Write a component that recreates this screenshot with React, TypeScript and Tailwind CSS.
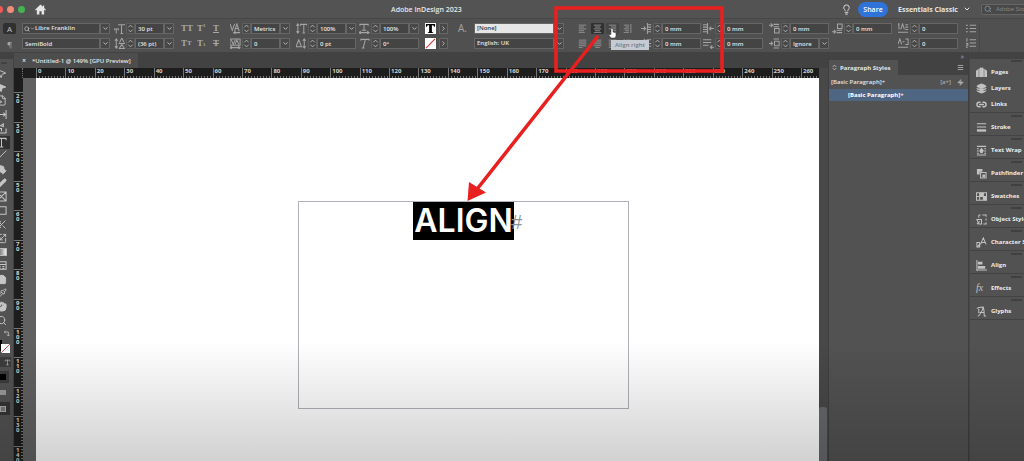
import React from 'react'
import {
  ChevronDown, ChevronRight, FileInput, Hand, Layers, Lightbulb, Link2, Menu,
  MousePointer2, PenTool, Pencil, Pipette, Scaling, Scissors, Search, Slash, StickyNote, Type, Zap,
} from 'lucide-react'
import clsx from 'clsx'

type Icon = React.ReactNode

/* Small line drawing on a 12 x 12 grid */
const Draw = ({ d, fill, className = 'size-[11px]' }: { d: string, fill?: string, className?: string }) => (
  <svg viewBox="0 0 12 12" className={clsx('shrink-0', className)} fill="none" stroke="currentColor" strokeWidth="1.1" aria-hidden="true">
    <path d={d} />
    {fill && <path d={fill} fill="currentColor" stroke="none" />}
  </svg>
)

const Stepper = ({ label }: { label: string }) => (
  <button aria-label={`Step ${label}`} className="flex h-[11px] w-[9px] shrink-0 items-center justify-center rounded-[1px] border border-[#5f5f5f] bg-[#484848] text-[#c4c4c4]">
    <Draw d="M3 4.5L6 1.5L9 4.5M3 7.5L6 10.5L9 7.5" className="size-[9px]" />
  </button>
)

const DropButton = ({ label }: { label: string }) => (
  <button aria-label={label} className="flex h-[11px] w-[10px] shrink-0 items-center justify-center border border-[#666] bg-[#484848] text-[#c4c4c4]">
    <ChevronDown className="size-[7px]" strokeWidth={3} />
  </button>
)

const Box = ({ label, value, className }: { label: string, value: string, className: string }) => (
  <input
    aria-label={label}
    defaultValue={value}
    className={clsx('h-[11px] shrink-0 border border-[#666] bg-[#444] px-[2px] text-[6px] leading-[9px] font-semibold text-[#e4e4e4] outline-none', className)}
  />
)

const Picker = ({ label, value, className }: { label: string, value: string, className: string }) => (
  <select
    aria-label={label}
    defaultValue={value}
    className={clsx('h-[11px] shrink-0 appearance-none border border-[#666] px-[2px] text-[6px] leading-[9px] font-semibold outline-none', className)}
  >
    <option>{value}</option>
  </select>
)

const Field = ({ icon, label, value, drop, wide }: { icon: Icon, label: string, value: string, drop?: boolean, wide?: boolean }) => (
  <div className="flex h-[11px] items-center">
    <span className="flex w-[12px] shrink-0 text-[#a4a4a4]">{icon}</span>
    <Stepper label={label} />
    <Box label={label} value={value} className={wide ? 'w-[39px]' : 'w-[29px]'} />
    {drop && <DropButton label={`${label} presets`} />}
  </div>
)

const Group = ({ className, children }: { className?: string, children: React.ReactNode }) => (
  <div className={clsx('flex shrink-0 flex-col gap-1', className)}>{children}</div>
)

const TextButton = ({ label, className, children }: { label: string, className?: string, children: React.ReactNode }) => (
  <button aria-label={label} className={clsx("flex h-[11px] w-4 items-center font-['Liberation_Serif'] text-[9px] leading-none font-bold text-[#a8a8a8]", className)}>
    {children}
  </button>
)

const alignRows = [
  [
    { label: 'Align left', d: 'M1 1.5H11M1 4H8M1 6.5H11M1 9H8M1 11.5H9' },
    { label: 'Align centre', d: 'M1 1.5H11M2.5 4H9.5M1 6.5H11M2.5 9H9.5M1 11.5H11' },
    { label: 'Align right', d: 'M1 1.5H11M4 4H11M1 6.5H11M4 9H11M3 11.5H11' },
    { label: 'Align towards spine', d: 'M1 1.5H8M3 4H8M1 6.5H8M3 9H8M1 11.5H8M10.5 0V12' },
  ],
  [
    { label: 'Justify left', d: 'M1 1.5H11M1 4H11M1 6.5H11M1 9H11M1 11.5H6' },
    { label: 'Justify centre', d: 'M1 1.5H11M1 4H11M1 6.5H11M1 9H11M3 11.5H9' },
    { label: 'Justify all', d: 'M1 1.5H11M1 4H11M1 6.5H11M1 9H11M1 11.5H11' },
    { label: 'Align away from spine', d: 'M4 1.5H11M4 4H9M4 6.5H11M4 9H9M4 11.5H11M1.5 0V12' },
  ],
]

const TitleBar = () => (
  <header className="flex h-[19px] shrink-0 items-center overflow-hidden border-b border-[#474747] bg-[#535353] text-[#e6e6e6]">
    <div className="flex w-[391px] shrink-0 items-center">
      <div className="-ml-1 flex gap-1">
        <button aria-label="Close window" className="size-[7px] rounded-full bg-[#ee5b55]" />
        <button aria-label="Minimise window" className="size-[7px] rounded-full bg-[#f08d77]" />
        <button aria-label="Zoom window" className="size-[7px] rounded-full bg-[#44b450]" />
      </div>
      <button aria-label="Home" className="ml-[10px]">
        <Draw d="" fill="M6 .5L0 6.2L.8 7L2 6V11.5H4.8V8H7.2V11.5H10V6L11.2 7L12 6.2L10 4.3V1.5H8.6V3Z" className="size-[11px]" />
      </button>
    </div>
    <h1 className="flex-1 text-[7px] leading-none font-semibold whitespace-nowrap">Adobe InDesign 2023</h1>
    <div className="flex w-[183px] shrink-0 items-center">
      <button aria-label="Tips" className="shrink-0"><Lightbulb className="size-[11px]" /></button>
      <button className="ml-[6px] h-[15px] w-[30px] shrink-0 rounded-full bg-[#2f73d9] text-[7px] leading-none font-semibold text-white">Share</button>
      <button className="ml-[10px] flex shrink-0 items-center text-[7px] leading-none font-bold whitespace-nowrap">
        <span className="w-[65px] text-left">Essentials Classic</span>
        <ChevronDown className="size-[8px]" strokeWidth={3} />
      </button>
      <label className="ml-[10px] flex h-[11px] w-[60px] shrink-0 items-center rounded-[2px] border border-[#666] bg-[#484848] pl-[2px]">
        <Search className="size-[8px] shrink-0 text-[#8fa3b8]" />
        <input type="search" aria-label="Search Adobe Stock" placeholder="Adobe Stock" className="ml-1 w-[44px] text-[6px] leading-none outline-none placeholder:text-[#8a8a8a]" />
      </label>
    </div>
  </header>
)

const ControlBar = () => (
  <div className="flex h-[33px] shrink-0 overflow-hidden bg-[#505050] pt-1 pl-[3px]">
    <Group className="w-[19px]">
      <button aria-label="Character formatting" className="h-[11px] w-[13px] rounded-[2px] bg-[#303030] text-[8px] leading-none text-[#c8c8c8]">A</button>
      <button aria-label="Paragraph formatting" className="h-[11px] w-[13px] text-[8px] leading-none text-[#a8a8a8]">¶</button>
    </Group>

    <Group>
      <div className="flex">
        <div className="flex w-[78px] items-center border border-[#666] bg-[#444] text-[#c4c4c4]">
          <Search className="ml-px size-[6px] shrink-0" strokeWidth={3} />
          <ChevronDown className="size-[5px] shrink-0" strokeWidth={3} />
          <input aria-label="Font family" defaultValue="Libre Franklin" className="h-[9px] w-[60px] text-[6px] leading-[9px] font-semibold text-[#e4e4e4] outline-none" />
        </div>
        <DropButton label="Font list" />
      </div>
      <div className="flex">
        <Box label="Font style" value="SemiBold" className="w-[78px]" />
        <DropButton label="Font style list" />
      </div>
    </Group>

    <Group className="ml-[4px]">
      <Field label="Font size" value="30 pt" drop icon={<Draw d="M0 6.5H5M2.5 6.5V11.5M4.5 2H12M8.2 2V11.5M7 11.5H10M.3 6V8M4.8 6V8" />} />
      <Field label="Leading" value="(36 pt)" drop icon={<Draw d="M2.5 1V11M1 3L2.5 1L4 3M1 9L2.5 11L4 9M5 11.5H12M5 6H12M6 5L8.5 0L11 5M6 11L8.5 7L11 11" />} />
    </Group>

    <Group className="ml-[7px]">
      <div className="flex">
        <TextButton label="All caps">TT</TextButton>
        <TextButton label="Superscript">T<sup className="text-[5px]">1</sup></TextButton>
        <TextButton label="Underline" className="underline">T</TextButton>
      </div>
      <div className="flex">
        <TextButton label="Small caps">T<span className="text-[7px]">T</span></TextButton>
        <TextButton label="Subscript">T<sub className="text-[5px]">1</sub></TextButton>
        <TextButton label="Strikethrough" className="line-through">T</TextButton>
      </div>
    </Group>

    <Group className="ml-px">
      <Field label="Kerning" value="Metrics" drop icon={<Draw d="M0 1L2.5 8L5 1M5 9L7.5 1L10 9M6 6H9M4 10.5H11M6 9L4 10.5L6 12" />} />
      <Field label="Tracking" value="0" drop icon={<Draw d="M0 1H11V8H0ZM1.5 2L3.5 7L5.5 2M5.5 7L7.5 2L9.5 7M0 10.5H11M2 9L0 10.5L2 12M9 9L11 10.5L9 12" />} />
    </Group>

    <Group className="ml-[6px]">
      <Field label="Vertical scale" value="100%" drop icon={<Draw d="M2 1V11M.5 3L2 1L3.5 3M.5 9L2 11L3.5 9M5 3V1.5H12V3M8.5 1.5V11.5M7 11H10" />} />
      <Field label="Baseline shift" value="0 pt" wide icon={<Draw d="M0 9.5H6L3 2ZM9 1V11M7.5 3L9 1L10.5 3M7.5 9L9 11L10.5 9" />} />
    </Group>

    <Group className="ml-[3px]">
      <Field label="Horizontal scale" value="100%" drop icon={<Draw d="M1 3V1.5H10V3M5.5 1.5V8M3 8H8M0 10.5H11M2 9L0 10.5L2 12M9 9L11 10.5L9 12" />} />
      <Field label="Skew" value="0°" wide icon={<Draw d="M2 3V1.5H11V3M7 1.5L4.5 11M3 11H6" />} />
    </Group>

    <Group className="ml-[6px]">
      <div className="flex gap-[3px]">
        <button aria-label="Fill" className="flex size-[11px] items-center justify-center bg-white">
          <Draw d="" fill="M1 1H11V4H10L9 2.5H7.5V9.5L9 10.5V11H3V10.5L4.5 9.5V2.5H3L2 4H1Z" className="size-[11px] text-black" />
        </button>
        <button aria-label="Fill options" className="flex h-[11px] w-[9px] items-center justify-center border border-[#666] bg-[#484848] text-[#c4c4c4]"><ChevronRight className="size-[7px]" strokeWidth={3} /></button>
      </div>
      <div className="flex gap-[3px]">
        <button aria-label="Stroke" className="size-[11px] bg-white">
          <Draw d="M1 11L11 1" className="size-[11px] text-[#d3302b]" />
        </button>
        <button aria-label="Stroke options" className="flex h-[11px] w-[9px] items-center justify-center border border-[#666] bg-[#484848] text-[#c4c4c4]"><ChevronRight className="size-[7px]" strokeWidth={3} /></button>
      </div>
    </Group>

    <span className="ml-[10px] h-[11px] w-[16px] shrink-0 text-[10px] leading-[11px] text-[#a4a4a4]">A.</span>

    <Group>
      <div className="flex">
        <Picker label="Character style" value="[None]" className="w-[80px] bg-[#e6e6e6] text-[#333]" />
        <DropButton label="Character style list" />
      </div>
      <div className="flex">
        <Picker label="Language" value="English: UK" className="w-[80px] bg-[#444] text-[#e4e4e4]" />
        <DropButton label="Language list" />
      </div>
    </Group>

    <Group className="ml-[12px] w-[64px]">
      {alignRows.map((row, i) => (
        <div className="flex gap-[2px]" key={i}>
          {row.map(({ label, d }) => (
            <button
              key={label}
              aria-label={label}
              className={clsx(
                'flex h-[11px] w-[13px] items-center justify-center rounded-[1px] text-[#9c9c9c]',
                label === 'Align centre' && 'bg-[#303030]',
                label === 'Align right' && 'bg-[#454545]',
              )}
            >
              <Draw d={d} className="size-[9px]" />
            </button>
          ))}
        </div>
      ))}
    </Group>

    <Group className="ml-px">
      <Field label="Left indent" value="0 mm" wide icon={<Draw d="M0 6H5M3 4L5 6L3 8M7 0V12M7 2H11M7 4.5H11M7 7H11M7 9.5H11" />} />
      <Field label="First line indent" value="0 mm" wide icon={<Draw d="M0 3H5M3 1L5 3L3 5M6 2H11M2 6H11M2 9H11" />} />
    </Group>

    <Group className="ml-[2px]">
      <Field label="Right indent" value="0 mm" wide icon={<Draw d="M12 6H7M9 4L7 6L9 8M5 0V12M0 2H5M0 4.5H5M0 7H5M0 9.5H5" />} />
      <Field label="Last line indent" value="0 mm" wide icon={<Draw d="M0 2H9M0 5H9M0 8H6M8 10H12M10 8L8 10L10 12" />} />
    </Group>

    <Group className="ml-[6px]">
      <Field label="Space before" value="0 mm" wide icon={<Draw d="M0 2.5H4M2 .5L4 2.5L2 4.5M5 1.5H11M5 4H11M6 6H11V11H6Z" />} />
      <Field label="Space between" value="Ignore" drop icon={<Draw d="M0 6H4M2 4L4 6L2 8M5 1H11M5 11H11M6 3.5H11V8.5H6Z" />} />
    </Group>

    <Group className="ml-[3px]">
      <Field label="Space after" value="0 mm" wide icon={<Draw d="M0 9.5H4M2 7.5L4 9.5L2 11.5M5 10.5H11M6 1H11V6H6ZM5 8H11" />} />
    </Group>

    <Group className="ml-[6px]">
      <Field label="Drop cap lines" value="0" wide icon={<Draw d="M1 0V7M0 2L1 .5M3 7L5 1L7 7M8 2H11M8 4.5H11M8 7H11M0 10H11" />} />
      <Field label="Drop cap characters" value="0" wide icon={<Draw d="M0 7L2 1L4 7M5 4H7M8 1H11V7H8M0 10H11" />} />
    </Group>

    <div className="ml-[8px] flex w-[14px] shrink-0 flex-col gap-1 border-r border-[#484848] text-[#a4a4a4]">
      <button aria-label="Bulleted list"><Draw d="M0 2.5H2M0 6H2M0 9.5H2M4 2.5H11M4 6H11M4 9.5H11" className="size-[11px]" /></button>
      <button aria-label="Numbered list"><Draw d="M1 0V4M0 6H2V8H0V10H2M4 2H11M4 5.5H11M4 9H11" className="size-[11px]" /></button>
    </div>
  </div>
)

const tools: { label: string, icon: Icon }[] = [
  { label: 'Selection', icon: <MousePointer2 className="size-[11px] shrink-0" /> },
  { label: 'Direct selection', icon: <MousePointer2 className="size-[11px] shrink-0 fill-current" /> },
  { label: 'Page', icon: <FileInput className="size-[11px] shrink-0" /> },
  { label: 'Gap', icon: <Draw d="M1 1V11M11 1V11M2 6H10M4 4L2 6L4 8M8 4L10 6L8 8" /> },
  { label: 'Content collector', icon: <Draw d="M1 4V11H11V6M3 9V6H6V9M5 3L8 1V4Z" /> },
  { label: 'Type', icon: <Draw d="M1 3.5V1.5H11V3.5M6 1.5V11M4 11H8" /> },
  { label: 'Line', icon: <Slash className="size-[11px] shrink-0" /> },
  { label: 'Pen', icon: <PenTool className="size-[11px] shrink-0 fill-current" /> },
  { label: 'Pencil', icon: <Pencil className="size-[11px] shrink-0 fill-current" /> },
  { label: 'Rectangle frame', icon: <Draw d="M1 1H11V11H1ZM1 1L11 11M11 1L1 11" /> },
  { label: 'Rectangle', icon: <Draw d="M1 2H11V10H1Z" /> },
  { label: 'Scissors', icon: <Scissors className="size-[11px] shrink-0" /> },
  { label: 'Free transform', icon: <Scaling className="size-[11px] shrink-0" /> },
  { label: 'Gradient swatch', icon: <span className="h-[8px] w-[11px] shrink-0 border border-[#bbb] bg-linear-to-r from-[#555] to-[#eee]" /> },
  { label: 'Gradient feather', icon: <Draw d="M1 2H11V10H1ZM1 5H11M3 7H5M7 7H9M3 9H5M7 9H9" /> },
  { label: 'Note', icon: <StickyNote className="size-[11px] shrink-0 fill-current" /> },
  { label: 'Eyedropper', icon: <Pipette className="size-[11px] shrink-0" /> },
  { label: 'Hand', icon: <Hand className="size-[11px] shrink-0 fill-current" /> },
  { label: 'Zoom', icon: <Search className="size-[11px] shrink-0" /> },
]

const Toolbox = () => (
  <aside aria-label="Tools" className="w-[13px] shrink-0 overflow-hidden bg-[#424242] pt-[7px] text-[#c6c6c6]">
    <div className="h-full bg-[#525252]">
      <div className="h-2 px-px pt-[3px]"><div className="h-[2px] w-[6px] bg-[#424242]" /></div>
      <div className="flex h-[260px] flex-col justify-between">
        {tools.map(({ label, icon }) => (
          <button key={label} aria-label={label} className={clsx('flex h-[13px] w-[10px] items-center justify-end pr-[3px]', label === 'Type' && 'bg-[#303030]')}>
            {icon}
          </button>
        ))}
      </div>
      <button aria-label="Swap fill and stroke" className="mt-px flex h-[12px] items-center pl-[3px]">
        <Draw d="M2 3H8V9M4 1L2 3L4 5M6 7L8 9L10 7" className="size-[8px]" />
      </button>
      <button aria-label="Fill and stroke" className="flex h-[15px] w-[10px] items-start">
        <span className="h-[11px] w-[5px] border border-black bg-white" />
        <span className="mt-1 -ml-px size-[9px] shrink-0 bg-white"><Draw d="M0 12L12 0" className="size-[9px] text-[#d3302b]" /></span>
      </button>
      <button aria-label="Formatting affects text" className="mt-[2px] flex h-[10px] w-[11px] items-center justify-end bg-[#3c3c3c]">
        <Type className="size-[7px]" />
      </button>
      <button aria-label="Apply colour" className="mt-1 flex h-[12px] w-[9px] items-center bg-[#3c3c3c]"><span className="h-[6px] w-[6px] bg-black" /></button>
      <button aria-label="View options" className="mt-[3px] flex h-[12px] w-[7px] items-center"><span className="h-[5px] w-[6px] bg-[#9a9a9a]" /></button>
      <button aria-label="Screen mode" className="mt-1 flex h-[13px] w-[10px] items-center bg-[#343434]"><span className="h-[6px] w-[6px] border border-[#aaa] bg-[#777]" /></button>
    </div>
  </aside>
)

const acrossMarks = Array.from({ length: 27 }, (_, i) => i * 10)
const downMarks = Array.from({ length: 13 }, (_, i) => 20 + i * 10)

const Document = () => (
  <main className="flex min-w-0 flex-1 flex-col pl-px">
    <div className="flex h-4 shrink-0 bg-[#424242]">
      <div className="mt-px flex w-[124px] items-center bg-[#4d4d4d] pl-[8px] text-[6px] leading-none font-semibold whitespace-nowrap text-[#e4e4e4]">
        <button aria-label="Close document" className="w-[10px] text-left text-[7px]">×</button>
        <span>*Untitled-1 @ 149% [GPU Preview]</span>
      </div>
    </div>
    <div className="flex min-h-0 flex-1">
      <div className="flex min-w-0 flex-1 flex-col">
        <div className="flex h-[10px] shrink-0 bg-[#1d1d1d] text-[6px] leading-[7px] font-bold text-[#d4d4d4]">
          <div className="w-[9px] shrink-0 border-r border-dotted border-[#777]" />
          <div className="w-[13px] shrink-0" />
          {acrossMarks.map((mark) => (
            <div key={mark} className={clsx('flex min-w-0 flex-col justify-between overflow-hidden border-l border-[#777]', mark === 260 ? 'flex-6' : 'flex-10')}>
              <span className="pl-px">{mark}</span>
              <span className="h-[2px] bg-[repeating-linear-gradient(to_right,transparent_0_2px,#777_2px_3px)]" />
            </div>
          ))}
        </div>
        <div className="flex min-h-0 flex-1">
          <div className="flex w-[9px] shrink-0 flex-col bg-[#1d1d1d] text-[6px] leading-[5px] font-bold text-[#d4d4d4]">
            <div className="min-h-0 flex-5 overflow-hidden" />
            {downMarks.map((mark) => (
              <div key={mark} className={clsx('flex min-h-0 justify-between overflow-hidden border-t border-[#777] pl-[2px]', mark === 140 ? 'flex-5' : 'flex-10')}>
                <span className="w-[4px] pt-px break-all">{mark}</span>
                <span className="w-[2px] bg-[repeating-linear-gradient(to_bottom,transparent_0_2px,#777_2px_3px)]" />
              </div>
            ))}
          </div>
          <div className="w-[13px] shrink-0 bg-[#616161]" />
          <div className="relative min-w-0 flex-1 overflow-hidden bg-white">
            {/* Text frame placed on the page */}
            <div className="absolute top-[123px] left-[262px] flex h-[208px] w-[331px] justify-center border border-[#aeb2b8] font-['Inter']">
              <p className="relative h-[38px] bg-black px-px text-[32px] leading-[38px] font-semibold text-white">
                ALIGN
                <span className="absolute top-0 left-full -ml-[3px] font-['Liberation_Sans'] text-[20px] leading-[40px] font-normal text-[#8b929c] italic">#</span>
              </p>
            </div>
          </div>
        </div>
      </div>
      <div className="flex w-[9px] shrink-0 flex-col justify-end bg-[#484848] pr-px">
        <div className="h-[54px] rounded-t-[3px] bg-[#66686c]" />
      </div>
    </div>
  </main>
)

const StylesPanel = () => (
  <section className="flex w-[141px] shrink-0 flex-col border-x border-[#3f3f3f] bg-[#525252] text-[#e4e4e4]">
    <div className="flex h-[8px] items-center justify-end bg-[#424242] pr-[4px] text-[7px] leading-none text-[#aaa]">»</div>
    <div className="flex h-[15px] items-center justify-between bg-[#424242] pr-1">
      <h2 className="flex h-full w-[69px] items-center gap-[2px] bg-[#525252] pl-[2px] text-[6px] leading-none font-bold whitespace-nowrap">
        <Draw d="M3 5L6 2L9 5M3 7L6 10L9 7" className="size-[7px]" />
        Paragraph Styles
      </h2>
      <button aria-label="Panel menu"><Menu className="size-[7px]" /></button>
    </div>
    <div className="flex h-[14px] items-center pr-[4px] pl-[2px] text-[6px] leading-none font-semibold">
      <span className="flex-1">[Basic Paragraph]+</span>
      <button className="mr-[6px] text-[#aaa]">[a+]</button>
      <button aria-label="Clear overrides"><Zap className="size-[7px] fill-current text-[#aaa]" /></button>
    </div>
    <button className="h-[12px] bg-[#4f6682] pl-[19px] text-left text-[6px] leading-none font-bold text-white">[Basic Paragraph]+</button>
  </section>
)

const dockGroups: { label: string, icon: Icon }[][] = [
  [
    { label: 'Pages', icon: <Draw d="M6 1V11" fill="M0 4L3 2V11H0ZM3.5 2L5.5 0V11H3.5ZM6.5 0L8.5 2V11H6.5ZM9 2L12 4V11H9Z" /> },
    { label: 'Layers', icon: <Layers className="size-[11px] fill-current" /> },
    { label: 'Links', icon: <Link2 className="size-[11px]" strokeWidth={3} /> },
  ],
  [{ label: 'Stroke', icon: <Draw d="M1 2H11M1 5.5H11" fill="M1 8H11V10.5H1Z" /> }],
  [{ label: 'Text Wrap', icon: <Draw d="M1 1.5H11M1 4H3M9 4H11M1 6.5H3M9 6.5H11M1 9H3M9 9H11M1 11H11" fill="M6 3L8.5 6L7 9H5L3.5 6Z" /> }],
  [{ label: 'Pathfinder', icon: <Draw d="M5 5H11V11H5Z" fill="M1 1H7V4H4V7H1ZM7 7H10V10H7Z" /> }],
  [{ label: 'Swatches', icon: <Draw d="M.5 2H11.5V10H.5ZM4 2V10M8 2V10M.5 6H11.5" fill="M4 2H8V6H4ZM8 6H11V10H8Z" /> }],
  [{ label: 'Object Styles', icon: <Draw d="M3 1H5M7 1H11V3M11 5V7M11 9V11H8M1 6H6V11H3ZM4 8L1 11M3 1V4" /> }],
  [{ label: 'Character Styles', icon: <Draw d="M5 8L8 1L11 8M6 6H10M1 6H4V11H1ZM4 8L1 11" /> }],
  [{ label: 'Align', icon: <Draw d="M1 0V12M1 11H12" fill="M2 2H7V5H2ZM2 6.5H10V9.5H2Z" /> }],
  [{ label: 'Effects', icon: <span className="font-['Liberation_Serif'] text-[10px] leading-none font-normal italic">fx</span> }],
  [{ label: 'Glyphs', icon: <Draw d="M2 11C4 11 7 5 8 1C9 5 9 9 9 11H11M4 7H9M1 3C2 1 5 1 8 1M3 3V8" /> }],
]

const Dock = () => (
  <aside aria-label="Panels" className="w-[55px] shrink-0 overflow-hidden border-l border-[#484848] bg-[#525252] pt-[6px] shadow-[inset_0_7px_0_#424242]">
    {dockGroups.map((group) => (
      <div key={group[0].label} className="flex flex-col items-start border-b border-[#434343]">
        <div className="flex h-[6px] w-full items-center justify-end pr-[2px]"><span className="h-[2px] w-[11px] bg-[#404040]" /></div>
        {group.map(({ label, icon }) => (
          <button key={label} className="flex h-4 items-center pl-[6px] text-[6px] leading-none font-bold whitespace-nowrap text-[#ececec]">
            <span className="flex w-[15px] shrink-0 text-[#c2c2c2]">{icon}</span>
            {label}
          </button>
        ))}
      </div>
    ))}
  </aside>
)

/* Red frame round the alignment buttons, tooltip, pointer and arrow */
const Callout = () => (
  <>
    <div role="tooltip" className="absolute top-[40px] left-[611px] h-[10px] w-[38px] bg-[#c5cad3] text-center text-[6px] leading-[10px] font-semibold text-[#777c85]">Align right</div>
    <svg className="pointer-events-none absolute top-0 left-0" width="760" height="220" fill="none" aria-hidden="true">
      <path d="M611 29.5C611 28 613 28 613 29.5V32L616 33V36L615 38H611L608.5 34.5L611 34.5Z" fill="#fff" stroke="#333" strokeWidth=".5" />
      <rect x="556" y="8" width="166" height="63" stroke="#e8201f" strokeWidth="3.6" />
      <path d="M598 36L474 193" stroke="#e8201f" strokeWidth="3.6" />
      <path d="M467.5 201L469 182L486 192.5Z" fill="#e8201f" />
    </svg>
  </>
)

const App = () => (
  <div className="relative flex h-screen flex-col overflow-hidden bg-[#424242] font-['Open_Sans','Noto_Sans',sans-serif]">
    <TitleBar />
    <ControlBar />
    <div className="flex min-h-0 flex-1">
      <Toolbox />
      <Document />
      <StylesPanel />
      <Dock />
    </div>
    <div className="pointer-events-none absolute inset-x-0 bottom-0 h-[120px] bg-linear-to-b from-transparent to-black/18" />
    <Callout />
  </div>
)

export default App
